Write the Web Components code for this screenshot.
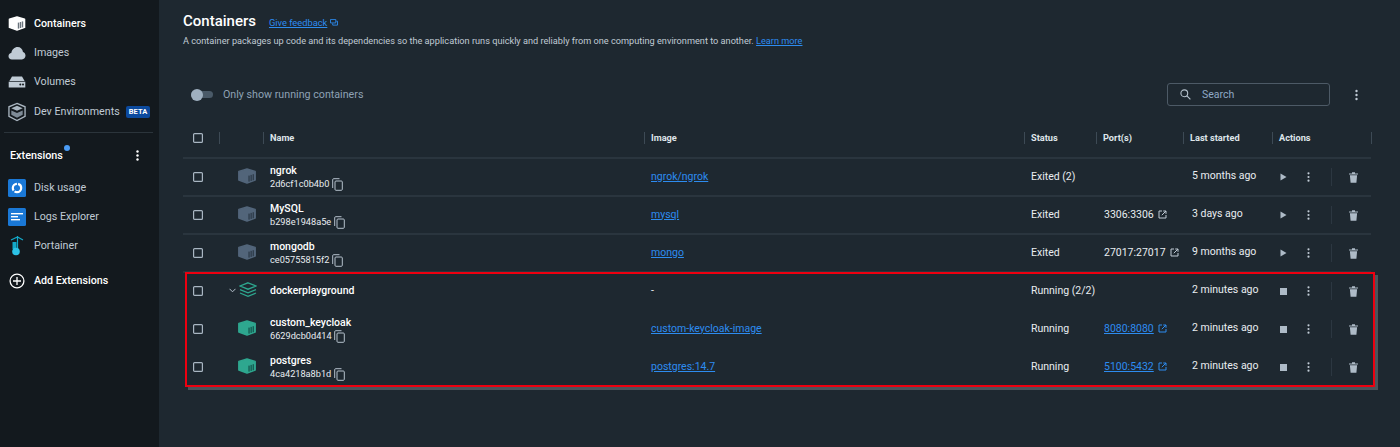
<!DOCTYPE html>
<html><head><meta charset="utf-8">
<style>
html,body{margin:0;padding:0;height:447px;overflow:hidden;background:#1e2830}
body{font-family:Roboto,"Liberation Sans",sans-serif;color:#fff}
</style></head><body>
<dd-app>
<dd-sidebar slot="side">
  <dd-nav icon="containers" active>Containers</dd-nav>
  <dd-nav icon="images">Images</dd-nav>
  <dd-nav icon="volumes">Volumes</dd-nav>
  <dd-nav icon="dev" beta>Dev Environments</dd-nav>
  <dd-ext-head></dd-ext-head>
  <dd-nav icon="disk">Disk usage</dd-nav>
  <dd-nav icon="logs">Logs Explorer</dd-nav>
  <dd-nav icon="portainer">Portainer</dd-nav>
  <dd-nav icon="add" active add>Add Extensions</dd-nav>
</dd-sidebar>
<dd-main>
  <dd-head></dd-head>
  <dd-toolbar></dd-toolbar>
  <dd-table-head></dd-table-head>
  <dd-row name="ngrok" cid="2d6cf1c0b4b0" image="ngrok/ngrok" status="Exited (2)" started="5 months ago" idw="59"></dd-row>
  <dd-row name="MySQL" cid="b298e1948a5e" image="mysql" status="Exited" port="3306:3306" started="3 days ago" idw="61"></dd-row>
  <dd-row name="mongodb" cid="ce05755815f2" image="mongo" status="Exited" port="27017:27017" started="9 months ago" idw="59"></dd-row>
  <dd-group>
    <dd-row stack name="dockerplayground" status="Running (2/2)" started="2 minutes ago" running plain="-"></dd-row>
    <dd-row name="custom_keycloak" cid="6629dcb0d414" image="custom-keycloak-image" status="Running" port="8080:8080" started="2 minutes ago" running idw="61"></dd-row>
    <dd-row name="postgres" cid="4ca4218a8b1d" image="postgres:14.7" status="Running" port="5100:5432" started="2 minutes ago" running idw="61"></dd-row>
  </dd-group>
</dd-main>
</dd-app>
<script>
const COLS='36px 44px 381px 380px 72px 87px 89px 99px';
const box=(c,bars)=>`<svg width="20" height="16" viewBox="0 0 20 16"><path d="M10 1 18.2 3.4V12L10 15 1.8 12V3.4Z" fill="${c}" stroke="${c}" stroke-width="1.4" stroke-linejoin="round"/><g fill="${bars}"><rect x="11.4" y="7.6" width="1.3" height="6"/><rect x="13.5" y="6.9" width="1.3" height="6"/><rect x="15.6" y="6.2" width="1.3" height="6"/></g></svg>`;
const ICONS={
 containers:`<svg width="18" height="15" viewBox="0 0 18 15"><path d="M9 1 16.6 3.2V11.4L9 14 1.4 11.4V3.2Z" fill="#fff" stroke="#fff" stroke-width="1.4" stroke-linejoin="round"/><g fill="#6a747d"><rect x="9.8" y="6.6" width="1.4" height="6"/><rect x="11.8" y="6" width="1.4" height="6"/><rect x="13.8" y="5.4" width="1.4" height="6"/></g></svg>`,
 images:`<svg width="18" height="14" viewBox="0 0 18 14"><path d="M4 13.5C1.8 13.5.5 12 .5 10.3.5 8.6 1.8 7.3 3.3 7.1 3.9 3.4 6.6 1 9.6 1c2.9 0 5 2.1 5.4 5 1.5.4 2.5 2 2.5 3.6 0 2.1-1.5 3.9-3.6 3.9Z" fill="#c0cbd5"/></svg>`,
 volumes:`<svg width="18" height="12" viewBox="0 0 18 12"><path d="M4 .5H14L16.6 5H1.4Z" fill="#c0cbd5"/><path d="M.7 5.7H17.3V11.5H.7Z" fill="#c0cbd5"/><circle cx="12.3" cy="8.6" r="1" fill="#13191e"/><circle cx="15" cy="8.6" r="1" fill="#13191e"/></svg>`,
 dev:`<svg width="19" height="20" viewBox="0 0 19 20"><path d="M9.5 1 18 4.5V14.5L9.5 19 1 14.5V4.5Z" fill="none" stroke="#aab6c1" stroke-width="1.4"/><path d="M9.5 3.4 15.5 6 9.5 8.6 3.5 6Z" fill="#aab6c1"/><path d="M3.5 8.5 9.5 11 15.5 8.5V13L9.5 16 3.5 13Z" fill="#7e8b97"/></svg>`,
 disk:`<svg width="18" height="18" viewBox="0 0 18 18"><rect width="18" height="18" rx="1.5" fill="#1a78d6"/><circle cx="9" cy="9" r="4.2" fill="none" stroke="#fff" stroke-width="2.2" stroke-dasharray="9 1.2"/></svg>`,
 logs:`<svg width="18" height="18" viewBox="0 0 18 18"><rect width="18" height="18" rx="1.5" fill="#1a78d6"/><g fill="#fff"><rect x="3" y="5" width="12" height="1.4"/><rect x="3" y="8" width="7" height="1.4"/><rect x="3" y="11" width="9" height="1.4"/></g></svg>`,
 portainer:`<svg width="14" height="20" viewBox="0 0 14 20"><path d="M7.5 0V13M1 4 7.5 1 13 4" fill="none" stroke="#13a8c8" stroke-width="1.2"/><rect x="2.5" y="6" width="4" height="7" fill="#13a8c8"/><circle cx="6" cy="15.5" r="3.8" fill="#2cc2e6"/></svg>`,
 add:`<svg width="16" height="16" viewBox="0 0 16 16"><circle cx="8" cy="8" r="6.9" fill="none" stroke="#fff" stroke-width="1.3"/><path d="M8 4V12M4 8H12" stroke="#fff" stroke-width="1.3"/></svg>`
};
const check=`<svg width="10" height="10" viewBox="0 0 10 10"><rect x=".6" y=".6" width="8.8" height="8.8" rx="1" fill="none" stroke="#a9b6c2" stroke-width="1.2"/></svg>`;
const copy=`<svg width="11" height="13" viewBox="0 0 11 13"><path d="M.7 10V1.8A1 1 0 0 1 1.7.7H7.5" fill="none" stroke="#b5c1cc" stroke-width="1"/><rect x="3" y="3" width="7.3" height="9.3" rx="1" fill="none" stroke="#b5c1cc" stroke-width="1"/></svg>`;
const ext=c=>`<svg width="9" height="9" viewBox="0 0 9 9"><path d="M4 1H1V8H8V5M5.2 1H8V3.8M8 1 3.8 5.2" fill="none" stroke="${c}" stroke-width="1"/></svg>`;
const dots=(c='#c0cbd5',h=11)=>`<svg width="3" height="${h}" viewBox="0 0 3 11"><circle cx="1.5" cy="1.5" r="1.2" fill="${c}"/><circle cx="1.5" cy="5.5" r="1.2" fill="${c}"/><circle cx="1.5" cy="9.5" r="1.2" fill="${c}"/></svg>`;
const def=(n,fn)=>customElements.define(n,class extends HTMLElement{connectedCallback(){if(this.shadowRoot)return;this.attachShadow({mode:'open'}).innerHTML=fn(this)}});

def('dd-app',()=>`<style>:host{display:flex;width:1400px;height:447px;overflow:hidden}</style><slot name="side"></slot><slot></slot>`);
def('dd-sidebar',()=>`<style>:host{display:block;width:159px;height:447px;background:#13191e;flex:none;box-sizing:border-box;padding-top:9px}</style><slot></slot>`);
def('dd-nav',e=>{const a=e.hasAttribute('active'),add=e.hasAttribute('add'),beta=e.hasAttribute('beta');return `<style>
:host{display:flex;align-items:center;height:29px;padding-left:8px;font-size:10.7px;font-weight:${a?500:400};color:${a?'#fff':'#c0cbd5'};${add?'margin-top:6px;':''}${beta?'margin-top:1px;':''}}
.i{width:18px;display:flex;justify-content:center;margin-right:8px;flex:none}
b{margin-left:6px;background:#0c4a9e;color:#fff;font-size:7.5px;font-weight:700;padding:1.5px 3px;border-radius:2px;letter-spacing:.1px}
</style><span class="i">${ICONS[e.getAttribute('icon')]}</span><slot></slot>${beta?'<b>BETA</b>':''}`});
def('dd-ext-head',()=>`<style>
:host{display:flex;align-items:flex-start;justify-content:space-between;margin:6px 4px 0;padding:16px 14px 0 6px;height:41px;border-top:1px solid #2b343b;box-sizing:border-box;font-size:10.8px;font-weight:500;position:relative;color:#fff;width:149px}
i{position:absolute;left:60px;top:12px;width:6px;height:6px;border-radius:50%;background:#4b9cf5}
span{line-height:13px}svg{margin-top:1px}
</style><span>Extensions</span><i></i>${dots('#fff')}`);
def('dd-main',()=>`<style>:host{display:block;flex:1;box-sizing:border-box;padding:0 29px 0 24px}</style><slot></slot>`);
def('dd-head',()=>`<style>
:host{display:block;height:83px;padding-top:11px;box-sizing:border-box}
.t{display:flex;align-items:center;gap:13px;height:20px}
h1{margin:0;font-size:15px;font-weight:500;color:#fff}
a{color:#2d8cf0;text-decoration:underline;font-size:9.3px}
.f{display:inline-flex;align-items:center;gap:3px;padding-top:2px}
p{margin:3px 0 0;font-size:9.18px;color:#c0cbd5;line-height:14px;white-space:nowrap}
</style><div class="t"><h1>Containers</h1><span class="f"><a>Give feedback</a><svg width="8" height="7" viewBox="0 0 9 8"><path d="M.5.5H6.5V4.5H.5ZM7 2.5H8.5V7H3V5" fill="none" stroke="#2d8cf0"/></svg></span></div><p>A container packages up code and its dependencies so the application runs quickly and reliably from one computing environment to another. <a style="font-size:inherit">Learn more</a></p>`);
def('dd-toolbar',()=>`<style>
:host{display:flex;align-items:center;height:23px;margin-bottom:12px;padding-left:8px;padding-right:13px;font-size:10.7px;color:#8ea2b5}
.tg{position:relative;width:22px;height:7px;background:#4a5a68;border-radius:4px;margin-right:10px}
.tg i{position:absolute;left:0;top:-2.5px;width:12px;height:12px;border-radius:50%;background:#9fb0c0}
.s{margin-left:auto;width:163px;height:23px;box-sizing:border-box;border:1px solid #4d5a66;border-radius:3px;display:flex;align-items:center;padding-left:12px;gap:11px;color:#8fa9c6;font-size:10.5px}
.m{margin-left:25px;display:flex}
</style><span class="tg"><i></i></span><span>Only show running containers</span><span class="s"><svg width="11" height="11" viewBox="0 0 11 11"><circle cx="4.3" cy="4.3" r="3.4" fill="none" stroke="#b5c1cc" stroke-width="1.1"/><path d="M6.9 6.9 10.4 10.4" stroke="#b5c1cc" stroke-width="1.2"/></svg>Search</span><span class="m">${dots('#c0cbd5',12)}</span>`);
def('dd-table-head',()=>`<style>
:host{display:grid;grid-template-columns:${COLS};height:41px;align-items:center;border-bottom:2px solid #2a353e;box-sizing:border-box;font-size:9.2px;font-weight:700;color:#dfe5ea;width:1188px}
span{height:12px;display:flex;align-items:center;border-left:1px solid #3d4a55;padding-left:6px;box-sizing:border-box}
span.c{border:0;padding-left:10px}
.e{position:absolute;left:1371px;height:12px;width:1px;background:#3d4a55}
</style><span class="c">${check}</span><span></span><span>Name</span><span>Image</span><span>Status</span><span>Port(s)</span><span>Last started</span><span>Actions</span><i class="e"></i>`);
def('dd-row',e=>{const g=a=>e.getAttribute(a),run=e.hasAttribute('running'),stack=e.hasAttribute('stack'),
 c=run?'#2ea78f':'#52657a',b=run?'#14584f':'#2d3b49',port=g('port');
 const icon=stack?`<span class="ch"><svg width="7" height="5" viewBox="0 0 7 5"><path d="M.5.8 3.5 3.8 6.5.8" fill="none" stroke="#b5c1cc"/></svg></span><svg width="18" height="16" viewBox="0 0 18 16"><path d="M9 .8 17 4 9 7.2 1 4Z" fill="none" stroke="#2ea78f" stroke-width="1.3"/><path d="M1 7.6 9 10.8 17 7.6M1 11 9 14.4 17 11" fill="none" stroke="#2ea78f" stroke-width="1.3"/></svg>`:box(c,b);
 return `<style>
:host{display:grid;grid-template-columns:${COLS};height:38px;align-items:center;${run?'padding-bottom:2px;':'border-bottom:2px solid #2a353e;'}box-sizing:border-box;font-size:10.5px;color:#e9edf0;width:1188px}
.c{padding-left:10px;display:flex}
.ic{display:flex;align-items:center;justify-content:flex-end;padding-right:6px;position:relative;${stack?'margin-top:-2px;':'padding-bottom:2px;'}}
.ch{position:absolute;left:10px;top:6px}.ch svg{display:block}
.n{padding-left:7px;display:flex;flex-direction:column;${stack?'padding-bottom:2px;':''}}
.n b{font-weight:500;font-size:10.5px;color:#fff;line-height:13px}
.id{display:flex;align-items:flex-start;font-size:9.2px;line-height:13px;color:#e9edf0}
.id span{width:${g('idw')||60}px;display:block}
.id svg{margin-top:1px;margin-left:3px}
.l{padding-left:7px;padding-bottom:2px}a{color:#2d8cf0;text-decoration:underline}
.st{padding-left:9px;padding-bottom:3px}
.pt{padding-left:8px;padding-bottom:2px;display:flex;align-items:center;gap:4px;font-size:10.5px}
.a{display:flex;align-items:center;padding-left:8px;height:100%}
.a>span{display:flex;align-items:center;justify-content:center}
.sep{width:1px;height:18px;background:#2c3741}
</style><span class="c">${check}</span><span class="ic">${icon}</span>
<span class="n"><b>${g('name')}</b>${g('cid')?`<span class="id"><span>${g('cid')}</span>${copy}</span>`:''}</span>
<span class="l">${g('image')?`<a>${g('image')}</a>`:g('plain')}</span>
<span class="l">${g('status')}</span>
<span class="pt">${port?(run?`<a>${port}</a>${ext('#2d8cf0')}`:`${port}${ext('#c0cbd5')}`):''}</span>
<span class="st">${g('started')}</span>
<span class="a"><span style="width:7px;margin-right:20px">${run?'<svg width="7" height="7"><rect width="7" height="7" fill="#aebbc7"/></svg>':'<svg width="7" height="8" viewBox="0 0 7 8"><path d="M.5.5 6.5 4 .5 7.5Z" fill="#aebbc7"/></svg>'}</span><span style="width:3px;margin-right:21px">${dots('#c0cbd5',10)}</span><span class="sep"></span><span style="margin-left:17px"><svg width="9" height="11" viewBox="0 0 9 11"><path d="M0 1.6H9V2.6H0ZM3 .3H6V1.6H3ZM.9 3.2H8.1L7.4 10.7H1.6Z" fill="#aebbc7"/></svg></span></span>`});
def('dd-group',()=>`<style>
:host{display:block;width:1188px;position:relative}
.o{position:absolute;left:2px;top:-1px;width:1190px;height:115px;box-sizing:border-box;border:2px solid #ee0010;box-shadow:3px 3px 0 #4b545b;pointer-events:none}
</style><slot></slot><div class="o"></div>`);
</script>
</body></html>
